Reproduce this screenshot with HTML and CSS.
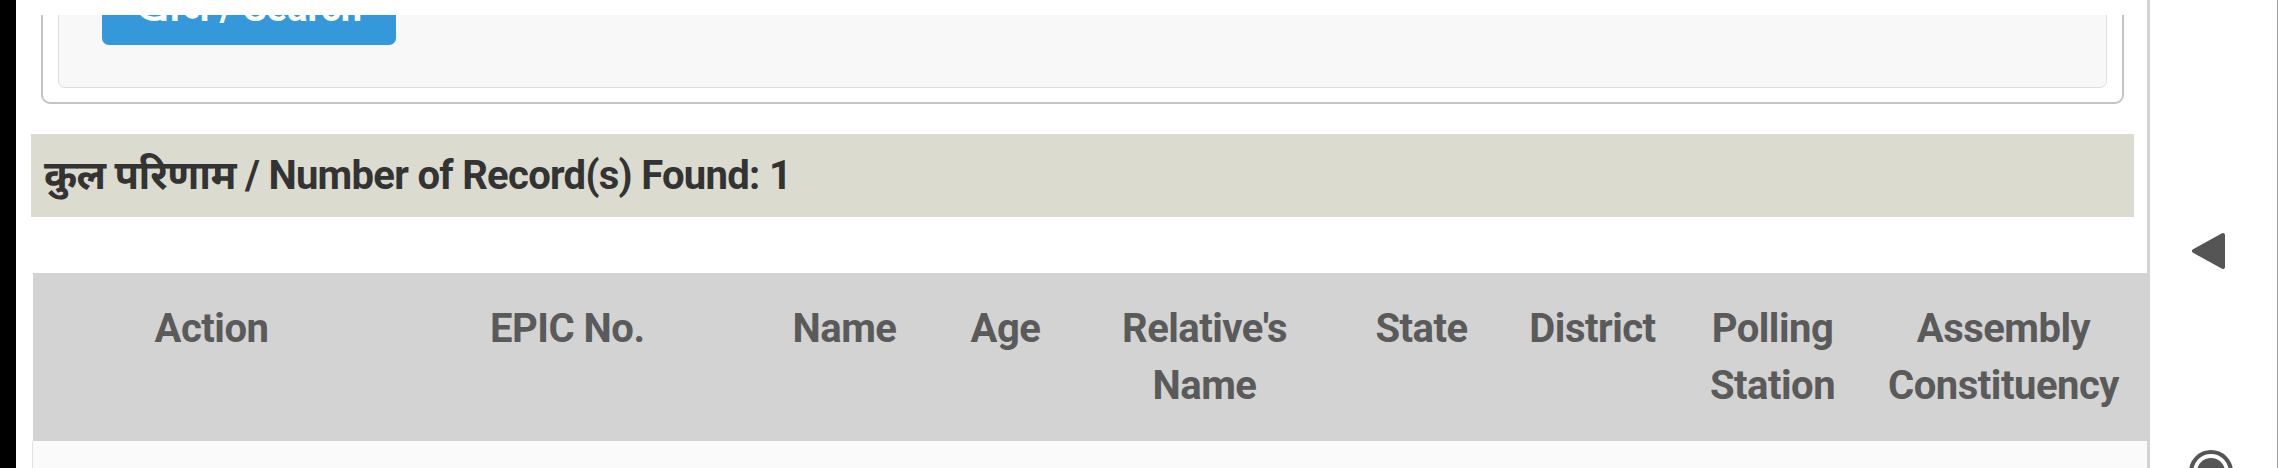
FILE: index.html
```html
<!DOCTYPE html>
<html lang="hi">
<head>
<meta charset="utf-8">
<title>Search Results</title>
<link rel="stylesheet" href="styles.css">
</head>
<body>
<div class="screen">
  <div class="bezel"></div>
  <main class="page">
    <div class="topbar"></div>
    <div class="content">
      <div class="search-panel">
        <div class="search-inner">
          <button class="btn-search" type="button"><span class="btn-label">खोजें / Search</span></button>
        </div>
      </div>
      <div class="result-count">कुल परिणाम / Number of Record(s) Found: 1</div>
      <table class="results">
        <colgroup>
          <col class="c-action"><col class="c-epic"><col class="c-name"><col class="c-age"><col class="c-rel"><col class="c-state"><col class="c-dist"><col class="c-ps"><col class="c-ac"><col class="c-more">
        </colgroup>
        <thead>
          <tr>
            <th>Action</th>
            <th>EPIC No.</th>
            <th>Name</th>
            <th>Age</th>
            <th>Relative's<br>Name</th>
            <th>State</th>
            <th>District</th>
            <th>Polling<br>Station</th>
            <th>Assembly<br>Constituency</th>
            <th></th>
          </tr>
        </thead>
        <tbody>
          <tr><td></td><td></td><td></td><td></td><td></td><td></td><td></td><td></td><td></td><td></td></tr>
        </tbody>
      </table>
    </div>
  </main>
  <aside class="side">
    <svg class="nav-back" width="35" height="38" viewBox="0 0 35 38" aria-hidden="true">
      <path d="M32 3 L3 19 L32 35 Z" fill="#555" stroke="#555" stroke-width="4" stroke-linejoin="round"/>
    </svg>
    <div class="nav-home"><div class="nav-home-dot"></div></div>
  </aside>
</div>
</body>
</html>
```
FILE: styles.css
```css
html, body {
  margin: 0;
  padding: 0;
  background: #ffffff;
}
body {
  width: 2278px;
  height: 468px;
  overflow: hidden;
  font-family: Roboto, "Liberation Sans", "Noto Sans", sans-serif;
}
.screen {
  display: flex;
  height: 468px;
  overflow: hidden;
}
.bezel {
  width: 16px;
  flex: none;
  background: #000;
}
.page {
  position: relative;
  width: 2131px;
  flex: none;
  overflow: hidden;
  background: #fff;
  border-right: 3px solid #d3d3d3;
}
.topbar {
  position: absolute;
  left: 0;
  top: 0;
  right: 0;
  height: 15px;
  background: #fff;
  z-index: 2;
}
.content {
  margin-top: -57px;
  padding: 0 13px 0 15px;
}
.search-panel {
  margin: 0 10px;
  border: 2px solid #c4c4c4;
  border-radius: 9px;
  padding: 15px 15px 14px 15px;
  background: #fff;
}
.search-inner {
  border: 1px solid #dedede;
  border-radius: 7px;
  background: #f8f8f8;
  padding: 20px 43px 42px 43px;
}
.btn-search {
  display: block;
  width: 294px;
  height: 64px;
  border: none;
  border-radius: 7px;
  background: #3498db;
  padding: 0;
  overflow: hidden;
}
.btn-label {
  display: block;
  height: 64px;
  color: #fff;
  font-family: Roboto, "Noto Sans", sans-serif;
  font-weight: 700;
  font-size: 38px;
  line-height: 55px;
  text-align: center;
}
.result-count {
  margin-top: 30px;
  height: 83px;
  box-sizing: border-box;
  padding: 13px 13px;
  background: #dcdbcf;
  color: #333;
  font-weight: 700;
  font-size: 40px;
  line-height: 57px;
  letter-spacing: -0.7px;
  white-space: nowrap;
}
.results {
  margin-top: 56px;
  margin-left: 1px;
  border-collapse: collapse;
  table-layout: fixed;
  width: 2174px;
}
.c-action { width: 358px; }
.c-epic { width: 354px; }
.c-name { width: 200px; }
.c-age { width: 122px; }
.c-rel { width: 276px; }
.c-state { width: 158px; }
.c-dist { width: 184px; }
.c-ps { width: 176px; }
.c-ac { width: 286px; }
.c-more { width: 60px; }
.results th {
  background: #d3d3d3;
  color: #5a5a5a;
  font-weight: 700;
  font-size: 40px;
  line-height: 57px;
  letter-spacing: -0.5px;
  padding: 27px 0 27px 0;
  text-align: center;
  vertical-align: top;
  white-space: nowrap;
}
.results td {
  background: #fafafa;
  height: 27px;
  padding: 0;
}
.results td:first-child {
  border-left: 1px solid #e2e2e2;
}
.side {
  flex: 1;
  display: flex;
  flex-direction: column;
  border-right: 1px solid #9a9a9a;
  background: #fff;
  overflow: hidden;
}
.nav-back {
  display: block;
  flex: none;
  margin: 232px 0 0 41px;
}
.nav-home {
  flex: none;
  margin: 180px 0 0 39px;
  width: 44px;
  height: 44px;
  box-sizing: border-box;
  border: 4px solid #555;
  border-radius: 50%;
  padding: 4px;
  background: #fff;
}
.nav-home-dot {
  width: 100%;
  height: 100%;
  border-radius: 50%;
  background: #555;
}
```
